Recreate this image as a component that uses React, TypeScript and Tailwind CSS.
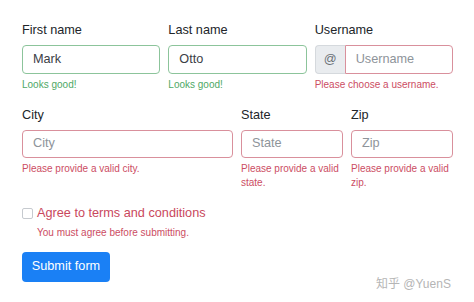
const valid = "border-[#8cc49b]"
const invalid = "border-[#d9909c]"

const Field = ({ label, value, placeholder, ok, msg, h }: { label: string; value?: string; placeholder?: string; ok: boolean; msg: string; h: string }) => (
    <div className="flex flex-col">
        <label className="h-[19px] leading-[19px] mb-[5px] text-[12.7px] text-[#212529]">{label}</label>
        <div className={`${h} rounded-[4px] border ${ok ? valid : invalid} px-[10px] flex items-center text-[12.7px] ${value ? 'text-[#3b4046]' : 'text-[#8e949a]'}`}>
            {value || placeholder}
        </div>
        <div className={`mt-[4px] text-[10px] leading-[14px] ${ok ? 'text-[#4fa865]' : 'text-[#cc4d63]'}`}>{msg}</div>
    </div>
)

export default function App() {
    return (
        <div className="w-[474px] h-[302px] relative bg-white overflow-hidden" style={{ fontFamily: '"Liberation Sans", Arial, sans-serif' }}>
            <div className="pl-[22px] pt-[21px] w-[453px]">
                <div className="grid grid-cols-3 gap-x-[8px]">
                    <Field label="First name" value="Mark" ok msg="Looks good!" h="h-[29px]" />
                    <Field label="Last name" value="Otto" ok msg="Looks good!" h="h-[29px]" />
                    <div className="flex flex-col">
                        <label className="h-[19px] leading-[19px] mb-[5px] text-[12.7px] text-[#212529]">Username</label>
                        <div className="flex h-[29px]">
                            <div className="w-[30px] bg-[#e9ecef] border border-[#d5d9dd] border-r-0 rounded-l-[4px] flex items-center justify-center text-[12.7px] text-[#6b7177]">@</div>
                            <div className={`flex-1 border ${invalid} rounded-r-[4px] px-[10px] flex items-center text-[12.7px] text-[#8e949a]`}>Username</div>
                        </div>
                        <div className="mt-[4px] text-[10px] leading-[14px] text-[#cc4d63]">Please choose a username.</div>
                    </div>
                </div>
                <div className="grid grid-cols-[211px_102px_102px] gap-x-[8px] mt-[14px]">
                    <Field label="City" placeholder="City" ok={false} msg="Please provide a valid city." h="h-[28px]" />
                    <Field label="State" placeholder="State" ok={false} msg="Please provide a valid state." h="h-[28px]" />
                    <Field label="Zip" placeholder="Zip" ok={false} msg="Please provide a valid zip." h="h-[28px]" />
                </div>
                <div className="mt-[14px] flex items-center gap-[4px] h-[19px]">
                    <div className="w-[11px] h-[11px] border border-[#c6cacf] rounded-[2px] bg-white" />
                    <span className="text-[12.7px] text-[#c9485d]">Agree to terms and conditions</span>
                </div>
                <div className="ml-[15px] mt-[3px] text-[10px] leading-[14px] text-[#cc4d63]">You must agree before submitting.</div>
                <button className="mt-[12px] h-[30px] w-[88px] rounded-[4px] bg-[#1a80f5] text-white text-[12.7px]">Submit form</button>
            </div>
            <div className="absolute left-[376px] top-[275px] text-[12px] text-[#b5b5b5]" style={{ fontFamily: '"Liberation Sans", "Noto Sans CJK SC", sans-serif' }}>知乎 @YuenS</div>
        </div>
    )
}
